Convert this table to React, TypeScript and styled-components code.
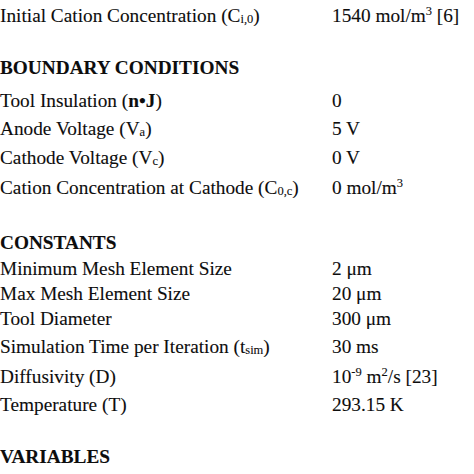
import React from "react";
import styled, { createGlobalStyle } from "styled-components";

const GlobalStyle = createGlobalStyle`
  html, body {
    margin: 0;
    padding: 0;
    background: #ffffff;
  }
  body {
    font-family: "Liberation Serif", "Times New Roman", serif;
    color: #0d0d0d;
  }
`;

const Page = styled.div`
  width: 474px;
  height: 474px;
  overflow: hidden;
  padding-top: 4px;
  box-sizing: border-box;
`;

const Row = styled.div<{ $space: number }>`
  display: grid;
  grid-template-columns: 332px 1fr;
  margin-top: ${(p) => p.$space}px;
  height: 24px;
  line-height: 24px;
  font-size: 19.3px;
  white-space: nowrap;
  -webkit-text-stroke: 0.1px #0d0d0d;
`;

const Heading = styled.div`
  font-weight: bold;
`;

const Label = styled.div``;

const Value = styled.div``;

const Sub = styled.sub`
  font-size: 12.5px;
  vertical-align: -1px;
  line-height: 0;
`;

const Sup = styled.sup`
  font-size: 12.5px;
  vertical-align: 7px;
  line-height: 0;
`;

type Item = {
  space: number;
  heading?: React.ReactNode;
  label?: React.ReactNode;
  value?: React.ReactNode;
};

const items: Item[] = [
  {
    space: 0,
    label: (
      <>
        Initial Cation Concentration (C<Sub>i,0</Sub>)
      </>
    ),
    value: (
      <>
        1540 mol/m<Sup>3</Sup> [6]
      </>
    ),
  },
  { space: 28, heading: "BOUNDARY CONDITIONS" },
  {
    space: 9,
    label: (
      <>
        Tool Insulation (<b>n•J</b>)
      </>
    ),
    value: "0",
  },
  {
    space: 4,
    label: (
      <>
        Anode Voltage (V<Sub>a</Sub>)
      </>
    ),
    value: "5 V",
  },
  {
    space: 5,
    label: (
      <>
        Cathode Voltage (V<Sub>c</Sub>)
      </>
    ),
    value: "0 V",
  },
  {
    space: 6,
    label: (
      <>
        Cation Concentration at Cathode (C<Sub>0,c</Sub>)
      </>
    ),
    value: (
      <>
        0 mol/m<Sup>3</Sup>
      </>
    ),
  },
  { space: 31, heading: "CONSTANTS" },
  { space: 2, label: "Minimum Mesh Element Size", value: "2 μm" },
  { space: 1, label: "Max Mesh Element Size", value: "20 μm" },
  { space: 1, label: "Tool Diameter", value: "300 μm" },
  {
    space: 4,
    label: (
      <>
        Simulation Time per Iteration (t<Sub>sim</Sub>)
      </>
    ),
    value: "30 ms",
  },
  {
    space: 6,
    label: "Diffusivity (D)",
    value: (
      <>
        10<Sup>-9</Sup> m<Sup>2</Sup>/s [23]
      </>
    ),
  },
  { space: 4, label: "Temperature (T)", value: "293.15 K" },
  { space: 28, heading: "VARIABLES" },
];

export default function App() {
  return (
    <>
      <GlobalStyle />
      <Page>
        {items.map((item, i) => (
          <Row key={i} $space={item.space}>
            {item.heading ? (
              <Heading>{item.heading}</Heading>
            ) : (
              <>
                <Label>{item.label}</Label>
                <Value>{item.value}</Value>
              </>
            )}
          </Row>
        ))}
      </Page>
    </>
  );
}
